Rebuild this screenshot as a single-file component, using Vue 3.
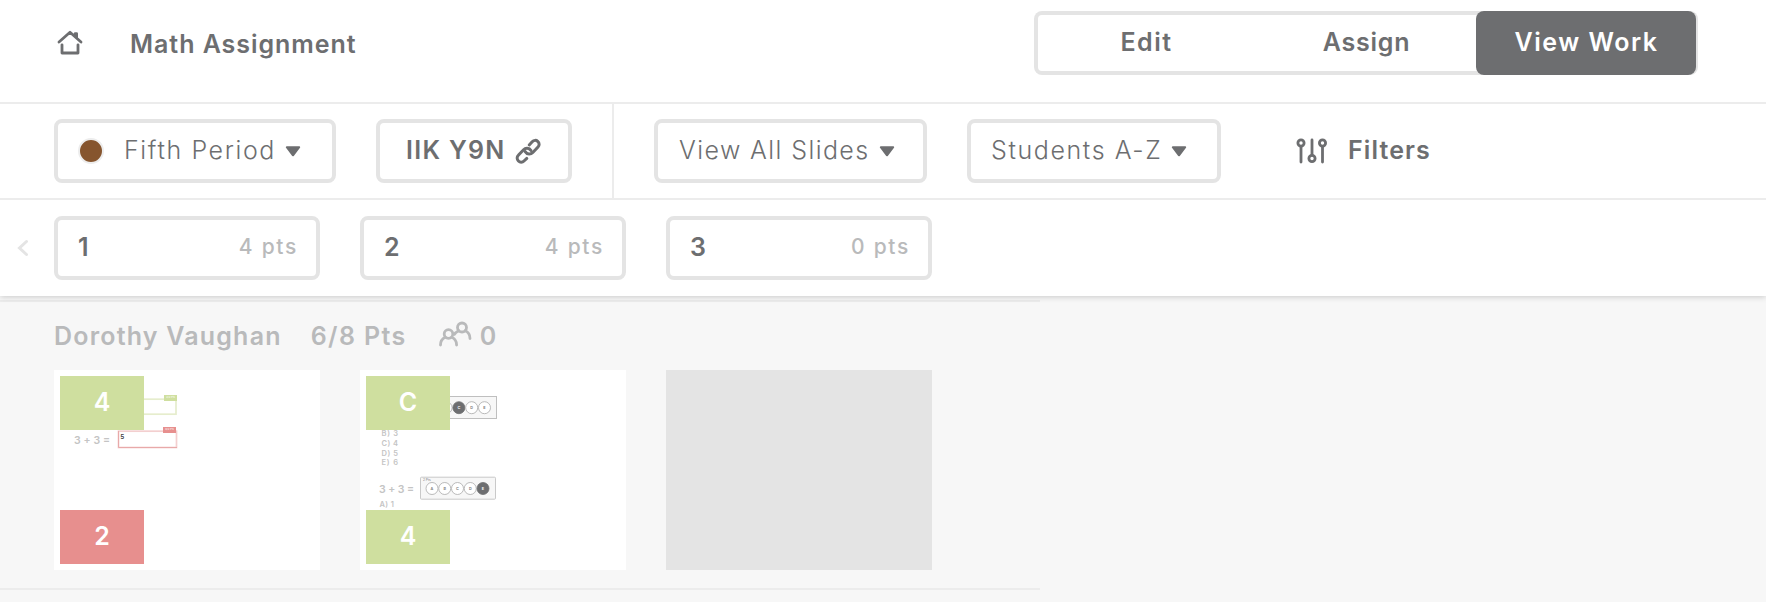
<template>
  <div class="page">
    <header class="topbar">
      <div class="title">
        <svg class="home-icon" viewBox="0 0 26 26">
          <path d="M2 12 L13 2.2 L24 12 M18.2 5.5 V3.6 H19.6 V7.5" />
          <path d="M5 14.8 V23 H21 V14.8" />
        </svg>
        <h1>Math Assignment</h1>
      </div>
      <nav class="tabs">
        <button
          v-for="tab in tabs"
          :key="tab.key"
          class="tab"
          :class="[`tab--${tab.key}`, { 'tab--active': tab.key === activeTab }]"
          @click="activeTab = tab.key"
        >{{ tab.label }}</button>
      </nav>
    </header>

    <section class="toolbar">
      <div class="toolbar-group toolbar-group--class">
        <button class="box box--period">
          <span class="dot"></span>
          <span class="label">Fifth Period</span>
          <svg class="caret" viewBox="0 0 16 11"><path d="M1.8 1.2 H14.2 L8 9.3 Z" /></svg>
        </button>
        <button class="box box--code">
          <span class="label">IIK Y9N</span>
          <svg class="link-icon" viewBox="0 0 26 26">
            <path d="M14.2 7 L17.2 3.7 C18.8 2 21.3 2 22.7 3.3 C24.6 5 24.5 7.4 23 9 L17.8 14.5 C16 16.3 12.2 16.8 10.2 13.6" />
            <path d="M11.8 20.4 L9 23 C7.4 24.6 5 24.6 3.4 23 C1.7 21.3 1.8 18.8 3.3 17.3 L8.6 11.7 C10.4 9.8 14.2 9.6 16 12.6" />
          </svg>
        </button>
      </div>
      <div class="toolbar-group">
        <button class="box box--slides">
          <span class="label">View All Slides</span>
          <svg class="caret" viewBox="0 0 16 11"><path d="M1.8 1.2 H14.2 L8 9.3 Z" /></svg>
        </button>
        <button class="box box--sort">
          <span class="label">Students A-Z</span>
          <svg class="caret" viewBox="0 0 16 11"><path d="M1.8 1.2 H14.2 L8 9.3 Z" /></svg>
        </button>
        <button class="filters">
          <svg class="filters-icon" viewBox="0 0 32 26">
            <path d="M5 8.5 V24 M16 2 V17 M26.5 8.5 V24" />
            <circle cx="5" cy="5" r="3.1" />
            <circle cx="16" cy="20.5" r="3.1" />
            <circle cx="26.5" cy="5" r="3.1" />
          </svg>
          <span class="label">Filters</span>
        </button>
      </div>
    </section>

    <section class="slides">
      <svg class="prev" viewBox="0 0 12 20"><path d="M9.5 3.5 L2.5 10 L9.5 16.5" /></svg>
      <div v-for="slide in slides" :key="slide.number" class="box slide">
        <span class="slide-number">{{ slide.number }}</span>
        <span class="slide-points">{{ slide.points }} pts</span>
      </div>
    </section>

    <main class="student">
      <div class="student-head">
        <span class="student-name">Dorothy Vaughan</span>
        <span class="student-score">6/8 Pts</span>
        <svg class="group-icon" viewBox="0 0 34 26">
          <circle cx="10.5" cy="13" r="4.3" />
          <path d="M2.5 24 C2.5 19.5 4.5 17.5 7.3 16.2 M13.7 16.2 C16.8 17.5 18.6 19.5 18.6 24" />
          <circle cx="24" cy="6.5" r="4.5" />
          <path d="M16.3 13.4 C17.5 11.5 18.8 10.8 20.8 9.7 M27.2 9.7 C30.5 11 32 13.5 32 17.5" />
        </svg>
        <span class="student-group">0</span>
      </div>

      <div class="cards">
        <article class="card">
          <!-- scaled down slide content, placed freely on the slide canvas -->
          <svg class="canvas" viewBox="0 0 266 200">
            <rect x="60" y="29.2" width="62" height="15" fill="none" stroke="#e6edcd" stroke-width="1.7" />
            <rect x="110" y="25" width="13" height="6" fill="#cfdf9f" />
            <text x="116.5" y="28.2" class="tag">2/2 Pts</text>
            <text x="20" y="74" class="sum" textLength="36">3 + 3 =</text>
            <rect x="64.5" y="61.2" width="58" height="16.3" fill="none" stroke="#f3cfcf" stroke-width="1.7" />
            <path d="M64.5 61 V77.5 H123" fill="none" stroke="#e8a9a9" stroke-width="1" />
            <rect x="109" y="57" width="13" height="6" fill="#e78f8e" />
            <text x="115.5" y="60.2" class="tag">0/2 Pts</text>
            <text x="66.3" y="69" class="answer">5</text>
          </svg>
          <span class="badge badge--right">4</span>
          <span class="badge badge--wrong">2</span>
        </article>

        <article class="card">
          <svg class="canvas" viewBox="0 0 266 200">
            <rect x="60" y="26.5" width="76.5" height="22" fill="#f7f7f7" stroke="#bfbfbf" />
            <g v-for="(letter, i) in letters" :key="`first-${letter}`">
              <circle :cx="73.3 + i * 12.8" cy="37.7" r="6" :class="['bubble', { 'bubble--on': letter === 'C' }]" />
              <text :x="73.3 + i * 12.8" y="39" :class="['bubble-text', { 'bubble-text--on': letter === 'C' }]">{{ letter }}</text>
            </g>
            <text v-for="line in options" :key="line.text" x="21.5" :y="line.y" class="option" textLength="16.5">{{ line.text }}</text>
            <text x="19" y="123" class="sum" textLength="35">3 + 3 =</text>
            <rect x="60.5" y="107.2" width="75" height="22" rx="1" fill="#f7f7f7" stroke="#c9c9c9" />
            <text x="63" y="110.6" class="mini">2 Pts</text>
            <g v-for="(letter, i) in letters" :key="`second-${letter}`">
              <circle :cx="72 + i * 12.75" cy="118.5" r="6" :class="['bubble', { 'bubble--on': letter === 'E' }]" />
              <text :x="72 + i * 12.75" y="119.8" :class="['bubble-text', { 'bubble-text--on': letter === 'E' }]">{{ letter }}</text>
            </g>
            <text x="19.5" y="137" class="option" textLength="14.5">A) 1</text>
          </svg>
          <span class="badge badge--right">C</span>
          <span class="badge badge--right">4</span>
        </article>

        <article class="card card--empty"></article>
      </div>
    </main>
  </div>
</template>

<script setup>
import { ref } from 'vue'

const activeTab = ref('view')

const tabs = [
  { key: 'edit', label: 'Edit' },
  { key: 'assign', label: 'Assign' },
  { key: 'view', label: 'View Work' }
]

const slides = [
  { number: 1, points: 4 },
  { number: 2, points: 4 },
  { number: 3, points: 0 }
]

const letters = ['A', 'B', 'C', 'D', 'E']

const options = [
  { text: 'B) 3', y: 66 },
  { text: 'C) 4', y: 76 },
  { text: 'D) 5', y: 86 },
  { text: 'E) 6', y: 95 }
]
</script>

<style>
body {
  margin: 0;
  background: #f7f7f7;
}
</style>

<style scoped>
.page {
  height: 602px;
  overflow: hidden;
  background: #f7f7f7;
  color: #6d6e70;
  font-family: Inter, "Open Sans", sans-serif;
  font-size: 25px;
  line-height: 30px;
  white-space: nowrap;
}

.page * {
  box-sizing: border-box;
}

svg {
  display: block;
  flex: none;
}

button {
  padding: 0;
  border: 0;
  background: none;
  color: inherit;
  font: inherit;
  letter-spacing: inherit;
}

/* Top bar */
.topbar {
  display: flex;
  justify-content: space-between;
  height: 104px;
  padding: 11px 68px 0 57px;
  background: #fff;
  border-bottom: 2px solid #ececec;
}

.title {
  display: flex;
  align-items: center;
  height: 64px;
}

.home-icon {
  width: 26px;
  height: 26px;
  fill: none;
  stroke: #6d6e70;
  stroke-width: 2.8;
  stroke-linecap: round;
  stroke-linejoin: round;
}

h1 {
  margin: 2px 0 0 47px;
  font-size: 25px;
  font-weight: 600;
  letter-spacing: 0.95px;
}

.tabs {
  display: flex;
  width: 664px;
  height: 64px;
  padding-left: 2px;
  border-radius: 8px;
  box-shadow: inset 0 0 0 4px #e4e4e4;
}

.tab {
  width: 220px;
  height: 64px;
  padding: 0 0 3px 1px;
  border-radius: 8px;
  font-weight: 600;
  letter-spacing: 1.5px;
}

.tab--assign {
  letter-spacing: 0.8px;
}

.tab--active {
  background: #6d6e70;
  color: #fff;
}

/* Toolbar */
.toolbar {
  display: flex;
  height: 96px;
  background: #fff;
  border-bottom: 2px solid #ececec;
}

.toolbar-group {
  display: flex;
  gap: 40px;
  padding: 15px 40px 0;
}

.toolbar-group--class {
  width: 614px;
  padding-left: 54px;
  border-right: 2px solid #ececec;
}

.box {
  display: flex;
  align-items: center;
  height: 64px;
  border: 4px solid #e4e4e4;
  border-radius: 8px;
  background: #fff;
}

.box .label {
  margin-top: -2px;
}

.box--period {
  width: 282px;
  padding-left: 20px;
  font-weight: 300;
  letter-spacing: 1.6px;
}

.box--code {
  width: 196px;
  padding-left: 26px;
  font-weight: 600;
  letter-spacing: 1.3px;
}

.box--slides {
  width: 273px;
  padding-left: 21px;
  font-weight: 300;
  letter-spacing: 1.4px;
}

.box--sort {
  width: 254px;
  padding-left: 20px;
  font-weight: 300;
  letter-spacing: 1.6px;
}

.dot {
  width: 26px;
  height: 26px;
  margin-right: 20px;
  border: 2px solid #ededed;
  border-radius: 50%;
  background: #86552e;
}

.caret {
  width: 16px;
  height: 11px;
  margin-left: 9px;
  fill: #6d6e70;
  stroke: #6d6e70;
  stroke-width: 2;
  stroke-linejoin: round;
}

.link-icon {
  width: 26px;
  height: 26px;
  margin-left: 9px;
  fill: none;
  stroke: #6d6e70;
  stroke-width: 3;
  stroke-linecap: round;
}

.filters {
  display: flex;
  align-items: center;
  height: 64px;
  margin-left: 35px;
  font-weight: 600;
  letter-spacing: 1.1px;
}

.filters .label {
  margin: -2px 0 0 20px;
}

.filters-icon {
  width: 32px;
  height: 26px;
  fill: none;
  stroke: #6d6e70;
  stroke-width: 2.8;
  stroke-linecap: round;
}

/* Slide numbers */
.slides {
  position: relative;
  display: flex;
  align-items: flex-start;
  gap: 40px;
  height: 96px;
  padding: 16px 0 0 17px;
  background: #fff;
  box-shadow: 0 1px 6px rgba(0, 0, 0, 0.18);
  /* keep the shadow off the toolbar above */
  clip-path: inset(0 0 -12px 0);
}

.prev {
  width: 12px;
  height: 20px;
  margin: 22px -15px 0 0;
  fill: none;
  stroke: #e4e4e4;
  stroke-width: 3;
  stroke-linecap: round;
}

.slide {
  justify-content: space-between;
  width: 266px;
  padding: 0 18px 0 20px;
}

.slide-number {
  margin-top: -2px;
  font-weight: 600;
}

.slide-points {
  margin-top: -2px;
  color: #b9babb;
  font-size: 21px;
  font-weight: 500;
  letter-spacing: 1.7px;
}

/* Student row */
.student {
  width: 1040px;
  height: 290px;
  margin-top: 4px;
  padding: 16px 0 0 54px;
  border-top: 2px solid #ececec;
  border-bottom: 2px solid #ececec;
}

.student-head {
  display: flex;
  align-items: center;
  height: 36px;
  color: #b9babb;
  font-weight: 600;
  letter-spacing: 1.2px;
}

.student-score {
  margin-left: 29px;
  letter-spacing: 1.4px;
}

.group-icon {
  width: 34px;
  height: 26px;
  margin: -4px 8px 0 31px;
  fill: none;
  stroke: #b9babb;
  stroke-width: 2.8;
  stroke-linecap: round;
}

.cards {
  display: flex;
  gap: 40px;
  margin-top: 16px;
}

.card {
  position: relative;
  display: flex;
  flex-direction: column;
  justify-content: space-between;
  width: 266px;
  height: 200px;
  padding: 6px;
  background: #fff;
}

.card--empty {
  background: #e4e4e4;
}

.canvas {
  position: absolute;
  inset: 0;
  width: 266px;
  height: 200px;
}

.badge {
  position: relative;
  width: 84px;
  height: 54px;
  color: #fff;
  font-weight: 600;
  line-height: 52px;
  text-align: center;
}

.badge--right {
  background: #cfdf9f;
}

.badge--wrong {
  background: #e78f8e;
}

/* Miniature slide text */
.sum {
  fill: #c4c4c4;
  font-size: 10.5px;
  font-weight: 600;
}

.option {
  fill: #c4c4c4;
  font-size: 7.5px;
  font-weight: 600;
}

.tag {
  fill: #fff;
  font-size: 2.6px;
  text-anchor: middle;
}

.answer {
  fill: #444;
  font-size: 6.5px;
  font-weight: 600;
}

.mini {
  fill: #777;
  font-size: 3.2px;
}

.bubble {
  fill: #fff;
  stroke: #aaa;
  stroke-width: 0.8;
}

.bubble--on {
  fill: #6d6e70;
  stroke: #6d6e70;
}

.bubble-text {
  fill: #777;
  font-size: 3.8px;
  font-weight: 600;
  text-anchor: middle;
}

.bubble-text--on {
  fill: #fff;
}
</style>
